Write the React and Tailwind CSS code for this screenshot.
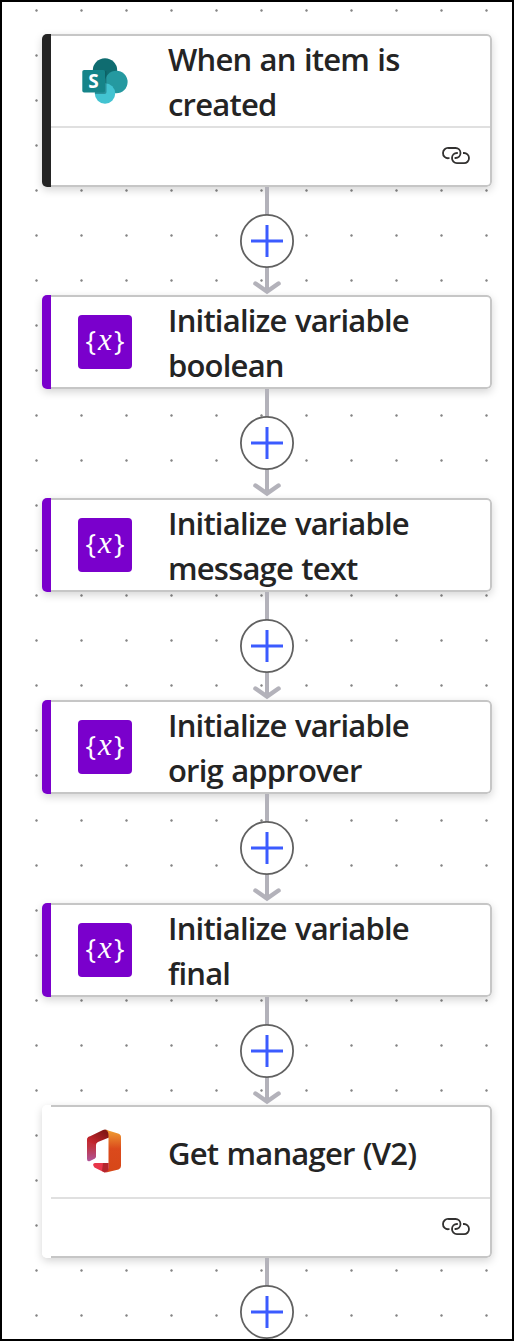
const LinkIcon = () => (
  <svg width="30" height="20" viewBox="0 0 30 20" fill="none" stroke="#323130" strokeWidth="1.8">
    <path d="M8.500 12.200H7.600A5 5 0 0 1 2 7A5 5 0 0 1 7.600 2H14.500A5 5 0 0 1 19.500 7A5 5 0 0 1 14.600 12H13.600" />
    <path d="M22 7H22.800A5 5 0 0 1 28 12A5 5 0 0 1 22.800 17.200H16A5 5 0 0 1 11 12A5 5 0 0 1 16 7H16.800" />
  </svg>
);

const SharePointIcon = () => (
  <svg width="54" height="54" viewBox="0 0 54 54">
    <circle cx="27" cy="16.500" r="12.200" fill="#0f6c70" />
    <circle cx="38.300" cy="28" r="11.300" fill="#2599a0" />
    <circle cx="27" cy="39.500" r="10.200" fill="#42c3d1" />
    <path d="M16 17H27.500Q28.500 17 28.500 18V38Q28.500 40 26.500 40H17Z" fill="#0b5558" opacity="0.45" />
    <rect x="4.300" y="16" width="22.700" height="22.500" rx="1.800" fill="#158489" />
    <text x="15.600" y="34" textAnchor="middle" fontFamily="Open Sans, sans-serif" fontWeight="700" fontSize="19" fill="#fff">
      S
    </text>
  </svg>
);

const VariableIcon = () => (
  <svg width="54" height="54" viewBox="0 0 54 54">
    <rect width="54" height="54" rx="4" fill="#7a00cc" />
    <g fill="#fff" textAnchor="middle">
      <text x="12.800" y="35.500" fontFamily="Open Sans, sans-serif" fontSize="28">{"{"}</text>
      <text x="27" y="35" fontFamily="Liberation Serif, serif" fontSize="31" fontStyle="italic">x</text>
      <text x="41.200" y="35.500" fontFamily="Open Sans, sans-serif" fontSize="28">{"}"}</text>
    </g>
  </svg>
);

const OfficeIcon = () => (
  <svg width="54" height="54" viewBox="0 0 54 54">
    <defs>
      <linearGradient id="officeLeft" x1="0" y1="0" x2="0" y2="1">
        <stop offset="0" stopColor="#c4272e" />
        <stop offset="0.4" stopColor="#c03340" />
        <stop offset="1" stopColor="#b0559a" />
      </linearGradient>
      <linearGradient id="officeTop" x1="0" y1="1" x2="1" y2="0">
        <stop offset="0.2" stopColor="#c4262e" />
        <stop offset="0.8" stopColor="#851815" />
      </linearGradient>
      <linearGradient id="officeRight" x1="0" y1="0" x2="0" y2="1">
        <stop offset="0" stopColor="#f0a033" />
        <stop offset="0.45" stopColor="#db4a1c" />
        <stop offset="1" stopColor="#d64718" />
      </linearGradient>
    </defs>
    <path d="M9 15Q9 13 11 11.500L18 15V31.500Q18 33 16.500 33.800L12 36Q9 37 9 34Z" fill="url(#officeLeft)" />
    <path d="M10 12.300L25 5Q27 4 29 5L31 7V12.500L20 17Q18 18 18 20L9 16Q9 13.300 10 12.300Z" fill="url(#officeTop)" />
    <path d="M27 4.600L40 8.500Q43 9.500 43 12V41Q43 43.500 40.500 44.500L28 47.500L30.500 43V10Q30.500 6 27 4.600Z" fill="url(#officeRight)" />
    <path d="M17 38H30.500V43Q30.500 47 26.500 47.500L16.500 42.500Q13.500 38.500 17 38Z" fill="#e8364a" />
    <path d="M25 38H30.500V43Q30.500 46.500 27 47.500L24 46Z" fill="#b3262d" />
  </svg>
);

const Connector = ({ last }) => (
  <div className="relative z-10 ml-[198px] h-[108.500px] w-[54px] shrink-0">
    <svg width="54" height="109" viewBox="0 0 54 109" fill="none" className="block">
      <path d={last ? "M27 0V28" : "M27 0V104"} stroke="#b3b2ba" strokeWidth="4" />
      {!last && (
        <path d="M15.500 96.500L27 104.500L38.500 96.500" stroke="#b3b2ba" strokeWidth="4.500" strokeLinecap="round" />
      )}
      <circle cx="27" cy="54" r="26.100" fill="#fff" stroke="#616161" strokeWidth="1.800" />
      <path d="M11 54H43M27 38V70" stroke="#3b5bff" strokeWidth="3" />
    </svg>
  </div>
);

const Card = ({ bar, icon, lines, footer, size }) => (
  <div className={`flex shrink-0 overflow-hidden rounded-[5px] bg-white shadow-[0_3px_8px_rgba(0,0,0,0.17)] ${size}`}>
    <div className={`w-[9px] shrink-0 ${bar}`} />
    <div className="flex flex-1 flex-col rounded-r-[5px] border-2 border-l-0 border-[#c6c6c6]">
      <div className="flex h-[90px] shrink-0 items-center">
        <div className="ml-[27px] w-[90px] shrink-0">{icon}</div>
        <div className="pt-0.5 font-['Open_Sans',sans-serif] text-[31px] leading-[45px] font-semibold tracking-[-0.8px] whitespace-nowrap text-[#242424] [word-spacing:1px]">
          {lines.map((line) => (
            <div key={line}>{line}</div>
          ))}
        </div>
      </div>
      {footer && (
        <div className="flex flex-1 items-center justify-end border-t-2 border-[#e0e0e0] pr-[19px] pb-px">
          <LinkIcon />
        </div>
      )}
    </div>
  </div>
);

const VARIABLES = ["boolean", "message text", "orig approver", "final"];

const App = () => {
  return (
    <div className="h-[1341px] w-[514px] overflow-hidden border-2 border-black bg-white bg-[radial-gradient(circle,#858585_0.8px,transparent_1.6px)] bg-[length:45px_45px] bg-[position:12px_-14px]">
      <div className="flex flex-col pt-8 pl-10">
        <Card
          size="h-[152.9px] w-[450px]"
          bar="bg-[#242424]"
          icon={<SharePointIcon />}
          lines={["When an item is", "created"]}
          footer
        />
        <Connector />
        {VARIABLES.map((name) => (
          <div key={name}>
            <Card
              size="h-[94px] w-[450px]"
              bar="bg-[#7a00cc]"
              icon={<VariableIcon />}
              lines={["Initialize variable", name]}
            />
            <Connector />
          </div>
        ))}
        <Card
          size="h-[152.4px] w-[450px]"
          bar="bg-white"
          icon={<OfficeIcon />}
          lines={["Get manager (V2)"]}
          footer
        />
        <Connector last />
      </div>
    </div>
  );
};

export default App;
